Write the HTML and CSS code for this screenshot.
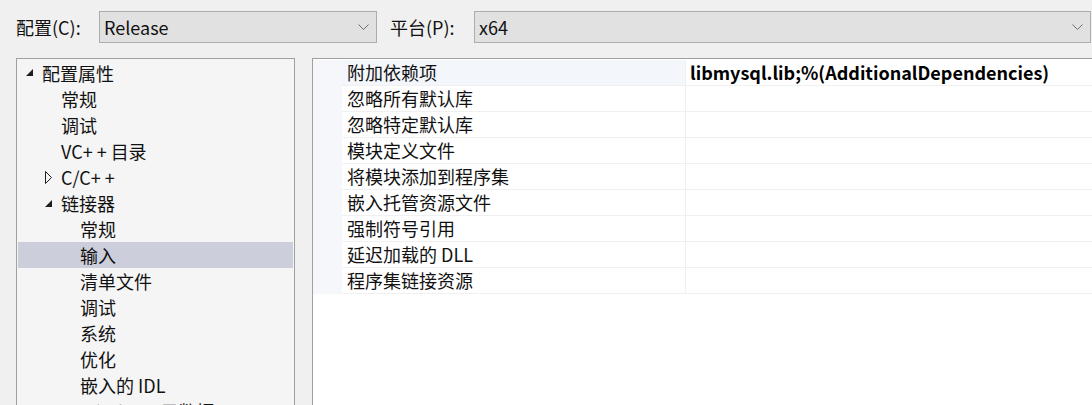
FILE: index.html
```html
<!DOCTYPE html>
<html lang="zh-CN">
<head>
<meta charset="utf-8">
<title>属性页</title>
<link rel="stylesheet" href="styles.css">
</head>
<body>
<div class="toolbar">
  <span class="lbl">配置(C):</span>
  <div class="combo combo-config">
    <span class="combo-text">Release</span>
    <svg class="chev" width="11" height="6" viewBox="0 0 11 6"><path d="M0.5 0.5 L5.5 5.5 L10.5 0.5" fill="none" stroke="#6d6d6d" stroke-width="1"/></svg>
  </div>
  <span class="lbl lbl-platform">平台(P):</span>
  <div class="combo combo-platform">
    <span class="combo-text">x64</span>
    <svg class="chev" width="11" height="6" viewBox="0 0 11 6"><path d="M0.5 0.5 L5.5 5.5 L10.5 0.5" fill="none" stroke="#6d6d6d" stroke-width="1"/></svg>
  </div>
</div>
<div class="main">
  <div class="tree">
    <div class="node l0"><span class="exp"><svg width="9" height="9" viewBox="0 0 9 9"><path d="M8 1 L8 8 L1 8 Z" fill="#1e1e1e"/></svg></span>配置属性</div>
    <div class="node l1"><span class="exp"></span>常规</div>
    <div class="node l1"><span class="exp"></span>调试</div>
    <div class="node l1"><span class="exp"></span>VC<span class="pp">++</span> 目录</div>
    <div class="node l1"><span class="exp"><svg width="9" height="13" viewBox="0 0 9 13"><path d="M1.5 0.5 L7.5 6.5 L1.5 12.5 Z" fill="none" stroke="#1e1e1e" stroke-width="1"/></svg></span>C/C<span class="pp">++</span></div>
    <div class="node l1"><span class="exp"><svg width="9" height="9" viewBox="0 0 9 9"><path d="M8 1 L8 8 L1 8 Z" fill="#1e1e1e"/></svg></span>链接器</div>
    <div class="node l2"><span class="exp"></span>常规</div>
    <div class="node l2 sel"><span class="exp"></span>输入</div>
    <div class="node l2"><span class="exp"></span>清单文件</div>
    <div class="node l2"><span class="exp"></span>调试</div>
    <div class="node l2"><span class="exp"></span>系统</div>
    <div class="node l2"><span class="exp"></span>优化</div>
    <div class="node l2"><span class="exp"></span>嵌入的 IDL</div>
    <div class="node l2"><span class="exp"></span>Windows 元数据</div>
  </div>
  <div class="grid">
    <div class="row active"><div class="gut"></div><div class="name">附加依赖项</div><div class="val bold">libmysql.lib;%(AdditionalDependencies)</div></div>
    <div class="row"><div class="gut"></div><div class="name">忽略所有默认库</div><div class="val"></div></div>
    <div class="row"><div class="gut"></div><div class="name">忽略特定默认库</div><div class="val"></div></div>
    <div class="row"><div class="gut"></div><div class="name">模块定义文件</div><div class="val"></div></div>
    <div class="row"><div class="gut"></div><div class="name">将模块添加到程序集</div><div class="val"></div></div>
    <div class="row"><div class="gut"></div><div class="name">嵌入托管资源文件</div><div class="val"></div></div>
    <div class="row"><div class="gut"></div><div class="name">强制符号引用</div><div class="val"></div></div>
    <div class="row"><div class="gut"></div><div class="name">延迟加载的 DLL</div><div class="val"></div></div>
    <div class="row"><div class="gut"></div><div class="name">程序集链接资源</div><div class="val"></div></div>
  </div>
</div>
</body>
</html>
```
FILE: styles.css
```css
html, body {
  margin: 0;
  padding: 0;
  background: #f0f0f0;
  overflow: hidden;
}
body {
  width: 1092px;
  height: 405px;
  font-family: "Noto Sans CJK SC", "Noto Sans", sans-serif;
  font-size: 18px;
  color: #111111;
}
.toolbar {
  display: flex;
  align-items: center;
  padding: 11px 0 0 16px;
  height: 32px;
}
.lbl {
  width: 83px;
  flex: none;
  line-height: 32px;
  white-space: nowrap;
}
.lbl-platform {
  width: 84px;
  margin-left: 13px;
}
.combo {
  box-sizing: border-box;
  height: 32px;
  border: 1px solid #adadad;
  background: #e1e1e1;
  display: flex;
  align-items: center;
  justify-content: space-between;
  padding: 0 7px 0 4px;
  flex: none;
}
.combo-config { width: 278px; }
.combo-platform { width: 617px; }
.combo-text { line-height: 30px; white-space: nowrap; }
.chev { display: block; }
.main {
  display: flex;
  margin-top: 15px;
  padding-left: 16px;
  gap: 17px;
}
.tree {
  box-sizing: border-box;
  width: 279px;
  height: 362px;
  flex: none;
  border: 1px solid #a0a0a0;
  border-bottom: none;
  background: #f5f5f5;
  padding: 1px 1px 0 1px;
  overflow: hidden;
}
.node {
  display: flex;
  align-items: center;
  height: 26px;
  line-height: 26px;
  white-space: nowrap;
}
.pp { letter-spacing: 4px; }
.exp {
  width: 17px;
  flex: none;
  display: flex;
  align-items: center;
  justify-content: flex-start;
}
.exp svg { display: block; }
.l0 { padding-left: 7px; }
.l0 .exp svg { margin-top: -2px; }
.l1 { padding-left: 26px; }
.l2 { padding-left: 45px; }
.sel { background: #cccedb; }
.grid {
  box-sizing: border-box;
  width: 820px;
  height: 362px;
  flex: none;
  border-top: 1px solid #a0a0a0;
  border-left: 1px solid #a0a0a0;
  background: #ffffff;
  padding-top: 1px;
}
.row {
  display: flex;
  height: 26px;
}
.gut {
  width: 29px;
  flex: none;
  background: #f5f7fb;
}
.name, .val {
  box-sizing: border-box;
  height: 26px;
  line-height: 25px;
  border-bottom: 1px solid #f0f0f0;
  white-space: nowrap;
}
.name {
  width: 344px;
  flex: none;
  padding-left: 5px;
  border-right: 1px solid #f0f0f0;
}
.val {
  flex: 1;
  padding-left: 4px;
}
.active .name { background: #f3f6fb; }
.bold { font-weight: bold; color: #000; }
```
